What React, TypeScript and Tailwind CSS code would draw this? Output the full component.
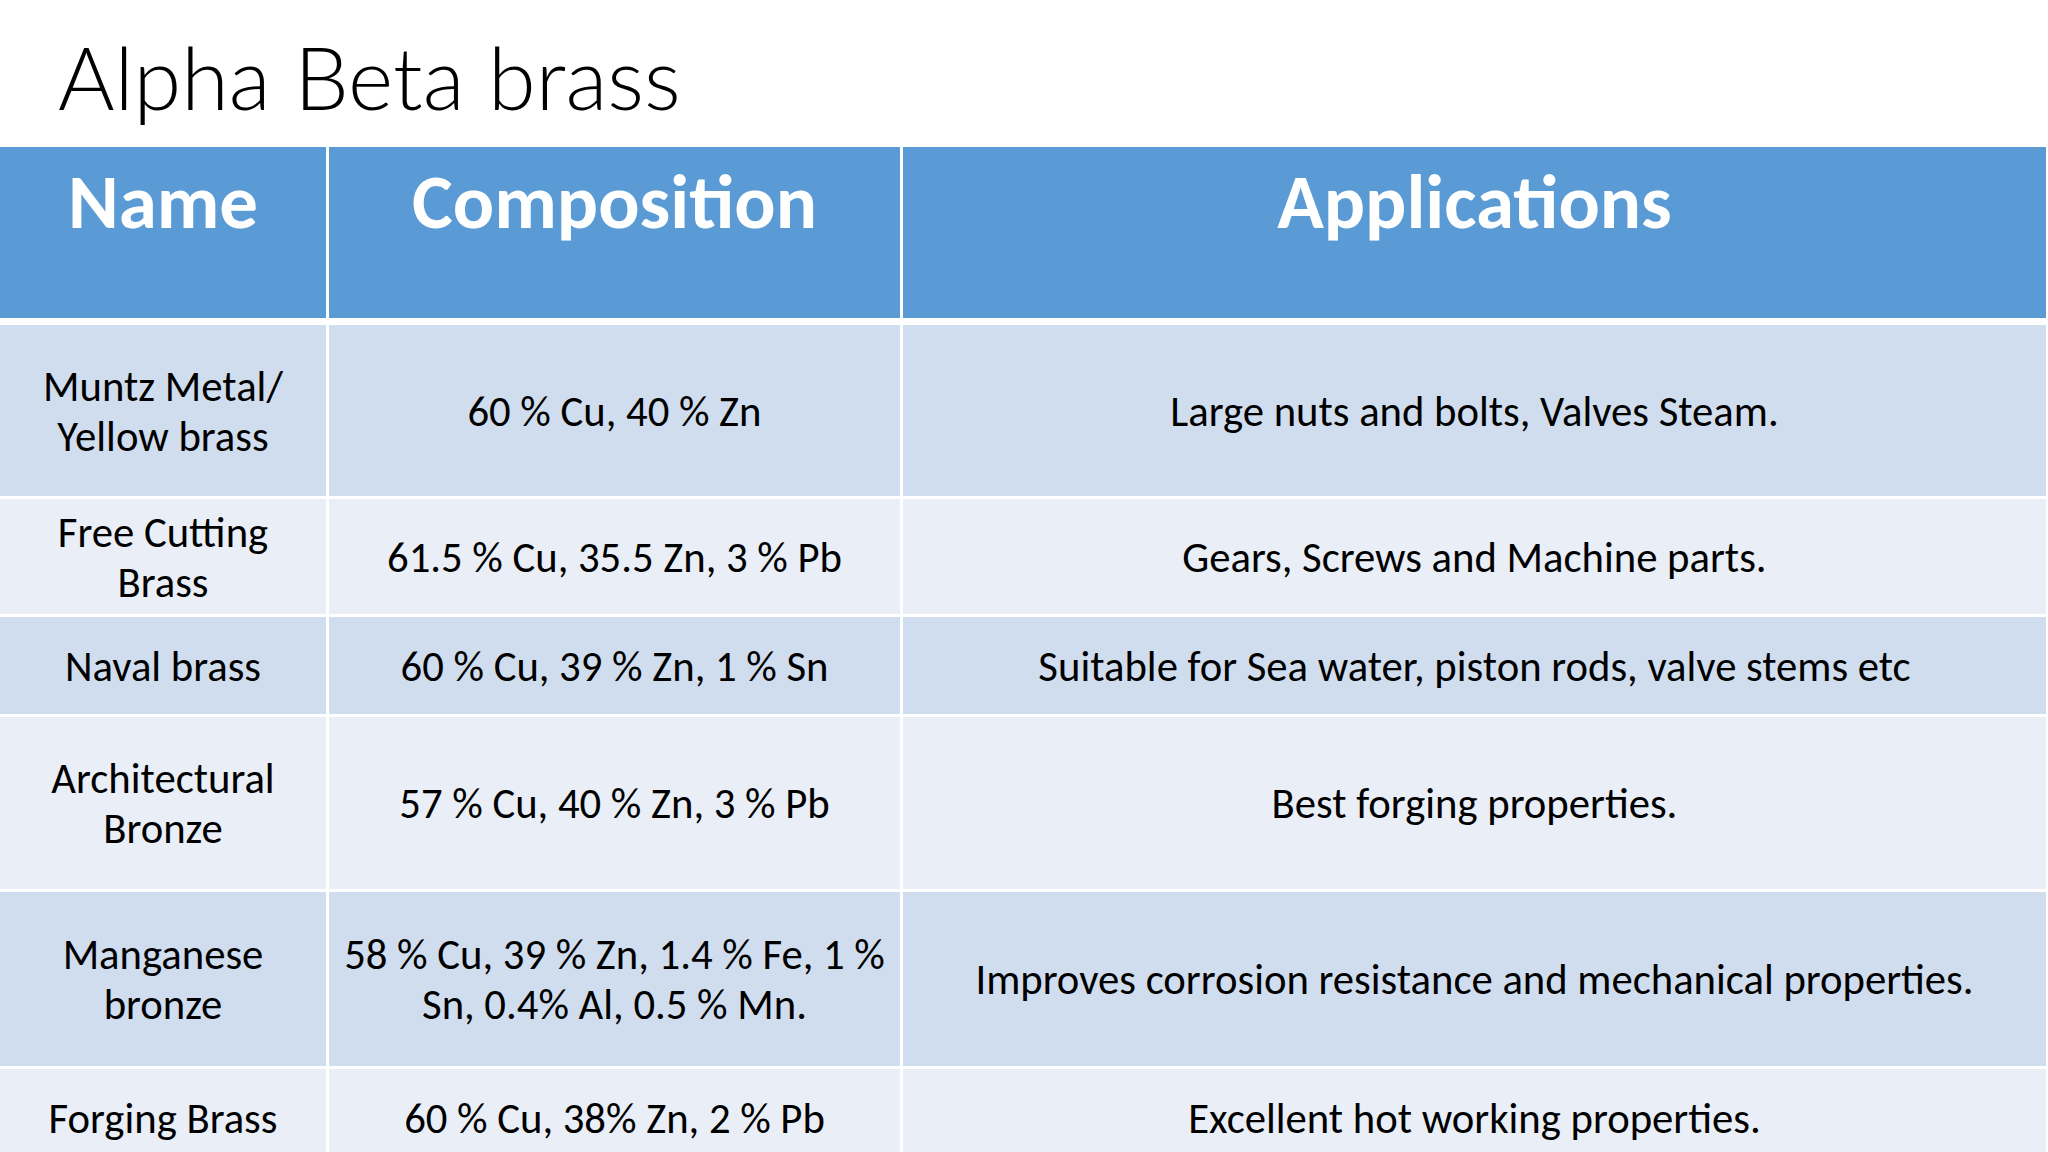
import React from 'react';

type Row = {
  name: React.ReactNode;
  comp: React.ReactNode;
  app: string;
  height: string;
  band: boolean;
};

const rows: Row[] = [
  {
    name: (
      <>
        Muntz Metal/
        <br />
        Yellow brass
      </>
    ),
    comp: '60 % Cu, 40 % Zn',
    app: 'Large nuts and bolts, Valves Steam.',
    height: 'h-[171px]',
    band: true,
  },
  {
    name: (
      <>
        Free Cutting
        <br />
        Brass
      </>
    ),
    comp: '61.5 % Cu, 35.5 Zn, 3 % Pb',
    app: 'Gears, Screws and Machine parts.',
    height: 'h-[115px]',
    band: false,
  },
  {
    name: 'Naval brass',
    comp: '60 % Cu, 39 % Zn, 1 % Sn',
    app: 'Suitable for Sea water, piston rods, valve stems etc',
    height: 'h-[97px]',
    band: true,
  },
  {
    name: (
      <>
        Architectural
        <br />
        Bronze
      </>
    ),
    comp: '57 % Cu, 40 % Zn, 3 % Pb',
    app: 'Best forging properties.',
    height: 'h-[172px]',
    band: false,
  },
  {
    name: (
      <>
        Manganese
        <br />
        bronze
      </>
    ),
    comp: (
      <>
        58 % Cu, 39 % Zn, 1.4 % Fe, 1 %
        <br />
        Sn, 0.4% Al, 0.5 % Mn.
      </>
    ),
    app: 'Improves corrosion resistance and mechanical properties.',
    height: 'h-[174px]',
    band: true,
  },
  {
    name: 'Forging Brass',
    comp: '60 % Cu, 38% Zn, 2 % Pb',
    app: 'Excellent hot working properties.',
    height: 'h-[98px]',
    band: false,
  },
];

const cols = 'grid grid-cols-[326px_571px_1143px] gap-x-[3px]';

export default function App() {
  return (
    <div className="h-[1152px] w-[2048px] overflow-hidden bg-white font-['Carlito','Lato',sans-serif] text-black">
      {/* slide title - light weight like Calibri Light */}
      <div className="h-[147px] pl-[58px] pt-[34px]">
        <h1 className="font-['Lato','Carlito',sans-serif] text-[86.5px] font-light leading-none whitespace-nowrap">
          Alpha Beta brass
        </h1>
      </div>

      <div className="w-[2046px]">
        {/* header row */}
        <div className={`${cols} mb-[7px] h-[171px]`}>
          {['Name', 'Composition', 'Applications'].map((h) => (
            <div key={h} className="bg-[#5b9bd5] pt-[17px] text-center text-[77px] font-bold leading-none text-white">
              {h}
            </div>
          ))}
        </div>

        {/* body rows */}
        <div className="flex flex-col gap-y-[3px]">
          {rows.map((r, i) => (
            <div key={i} className={`${cols} ${r.height}`}>
              {[r.name, r.comp, r.app].map((c, j) => (
                <div
                  key={j}
                  className={`flex items-center justify-center text-center text-[42.7px] leading-[50px] whitespace-nowrap ${
                    r.band ? 'bg-[#d0ddee]' : 'bg-[#e9eef7]'
                  }`}
                >
                  <div>{c}</div>
                </div>
              ))}
            </div>
          ))}
        </div>
      </div>
    </div>
  );
}
